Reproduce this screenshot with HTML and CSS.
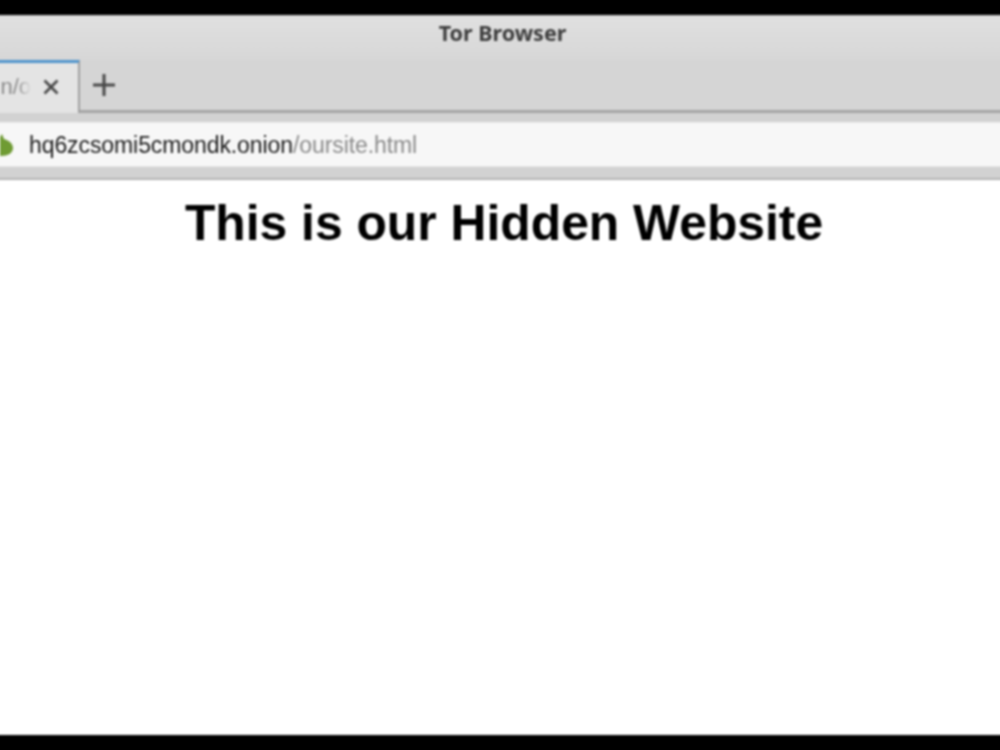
FILE: index.html
```html
<!DOCTYPE html>
<html lang="en">
<head>
<meta charset="utf-8">
<title>Tor Browser</title>
<link rel="stylesheet" href="styles.css">
</head>
<body>
<div class="frame">
  <header class="chrome">
    <div class="titlebar"><span class="title">Tor Browser</span></div>
    <div class="tabbar">
      <div class="tab">
        <span class="tab-label">n/o</span>
        <svg class="tab-close" viewBox="0 0 16 16" aria-hidden="true"><path d="M1.5 1.5 14.5 14.5M14.5 1.5 1.5 14.5"/></svg>
      </div>
      <svg class="new-tab" viewBox="0 0 22 22" aria-hidden="true"><path d="M11 0V22M0 11H22"/></svg>
    </div>
    <div class="toolbar">
      <div class="urlbar">
        <svg class="onion" viewBox="0 0 13 24" aria-hidden="true">
          <path d="M1 23C-5 23-9 19-9 14-9 10-5 8-2 7L2 1 4 6C8 7 13 10 13 15 13 20 8 23 1 23Z"/>
        </svg>
        <span class="url"><span class="host">hq6zcsomi5cmondk.onion</span><span class="path">/oursite.html</span></span>
      </div>
    </div>
  </header>
  <main class="page">
    <h1 class="headline">This is our Hidden Website</h1>
  </main>
</div>
</body>
</html>
```
FILE: styles.css
```css
* { box-sizing: border-box; }
html, body { margin: 0; height: 100%; background: #000; overflow: hidden; }
.frame {
  width: 1012px;
  height: 750px;
  margin-left: -6px;
  padding: 15px 0;
  display: flex;
  flex-direction: column;
  filter: blur(0.8px);
}
.chrome { flex: none; font-family: "Liberation Sans", Arial, sans-serif; }
.titlebar {
  height: 45px;
  padding-top: 4px;
  text-align: center;
  background: linear-gradient(#e0e0e0, #d7d7d7);
  border-top: 1px solid #c8c8c8;
}
.title {
  font-family: "Noto Sans", sans-serif;
  font-weight: 700;
  font-size: 21.5px;
  line-height: 26px;
  color: #3c3c3c;
  margin-left: 5px;
}
.tabbar {
  height: 53px;
  display: flex;
  align-items: center;
  background: #d5d5d5;
  border-bottom: 3px solid #a5a5a5;
}
.tab {
  width: 86px;
  height: 53px;
  margin-bottom: -3px;
  flex: none;
  display: flex;
  align-items: center;
  justify-content: flex-end;
  gap: 12px;
  padding: 0 19px 3px 0;
  overflow: hidden;
  background: #e4e4e4;
  border-top: 3px solid #4f94cc;
  border-right: 2px solid #a0a0a0;
}
.tab-label {
  font-size: 22px;
  color: #8c8c8c;
  white-space: nowrap;
  mask-image: linear-gradient(to right, #000 55%, transparent 100%);
}
.tab-close { width: 16px; height: 16px; flex: none; fill: none; stroke: #484848; stroke-width: 2.6; }
.new-tab { width: 22px; height: 22px; margin-left: 13px; flex: none; fill: none; stroke: #484848; stroke-width: 3; }
.toolbar {
  height: 67px;
  padding: 9px 0 11px;
  background: #d2d2d2;
  border-bottom: 2px solid #b4b4b4;
}
.urlbar {
  height: 45px;
  display: flex;
  align-items: center;
  gap: 16px;
  padding-left: 6px;
  background: #f7f7f7;
  border-top: 1px solid #ececec;
  border-bottom: 1px solid #e6e6e6;
}
.onion { width: 13px; height: 24px; flex: none; fill: #6f9b33; }
.url {
  font-size: 23px;
  letter-spacing: -0.09px;
  white-space: nowrap;
  padding-top: 2px;
  font-weight: 400;
}
.host { color: #1c1c1c; }
.path { color: #8a8a8a; }
.page {
  flex: 1;
  background: #fff;
  font-family: "Liberation Sans", Arial, sans-serif;
}
.headline {
  margin: 15px 0 0;
  text-align: center;
  font-size: 49.8px;
  line-height: 56px;
  font-weight: 700;
  color: #000;
  padding-left: 8px;
}
```
